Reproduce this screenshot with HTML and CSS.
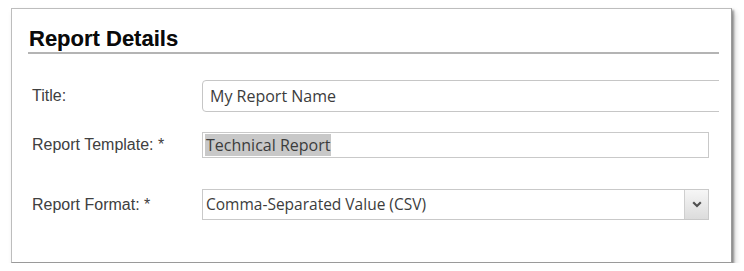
FILE: index.html
```html
<!DOCTYPE html>
<html>
<head>
<meta charset="utf-8">
<link rel="stylesheet" href="styles.css">
</head>
<body>
<div class="frame">
  <div class="panel">
    <h2 class="heading">Report Details</h2>
    <div class="row row-title">
      <div class="label">Title:</div>
      <div class="field field-title">My Report Name</div>
    </div>
    <div class="row row-template">
      <div class="label">Report Template: *</div>
      <div class="field field-template"><span class="selected">Technical Report</span></div>
    </div>
    <div class="row row-format">
      <div class="label">Report Format: *</div>
      <div class="field field-select">
        <span class="select-text">Comma-Separated Value (CSV)</span>
        <span class="select-btn">
          <svg width="10" height="7" viewBox="0 0 10 7"><path d="M1.2 1.3 L5 5 L8.8 1.3" fill="none" stroke="#505050" stroke-width="2.2"/></svg>
        </span>
      </div>
    </div>
  </div>
</div>
</body>
</html>
```
FILE: styles.css
```css
html, body {
  margin: 0;
  padding: 0;
  background: #ffffff;
}
body {
  font-family: "Liberation Sans", Arial, sans-serif;
}
.frame {
  box-sizing: border-box;
  margin: 8px 0 0 11px;
  width: 721px;
  height: 255px;
  padding: 17px 12px 0 16px;
  border: 1px solid #bdbdbd;
  border-right-color: #9a9a9a;
  border-bottom-color: #9a9a9a;
  background: #ffffff;
  box-shadow: 2px 2px 2px rgba(0, 0, 0, 0.35), 3px 4px 6px rgba(0, 0, 0, 0.2);
}
.panel {
  overflow: hidden;
}
.heading {
  margin: 0;
  padding-left: 1px;
  font-size: 22px;
  line-height: 26px;
  font-weight: bold;
  color: #0a0a0a;
  border-bottom: 2px solid #b4b4b4;
  text-shadow: 0 0 0.5px rgba(0, 0, 0, 0.4);
}
.row {
  display: flex;
  align-items: center;
}
.row-title { margin-top: 26px; }
.row-template { margin-top: 20px; }
.row-format { margin-top: 31px; }
.label {
  flex: 0 0 auto;
  box-sizing: border-box;
  width: 174px;
  padding-left: 4px;
  font-size: 16px;
  line-height: 18px;
  color: #404040;
}
.field {
  flex: 0 0 auto;
  box-sizing: border-box;
  font-family: "Open Sans", "Liberation Sans", sans-serif;
  font-size: 16px;
  color: #3c3c3c;
  background: #ffffff;
  white-space: nowrap;
}
.field-title {
  width: 560px;
  height: 32px;
  line-height: 30px;
  padding: 0 7px;
  border: 1px solid #c6c6c6;
  border-radius: 4px;
}
.field-template {
  width: 507px;
  height: 26px;
  padding: 1px 2px;
  border: 1px solid #c9c9c9;
  line-height: 22px;
}
.selected {
  display: inline-block;
  background: #c8c8c8;
  padding: 0 1px;
  line-height: 22px;
}
.field-select {
  width: 507px;
  height: 31px;
  border: 1px solid #c9c9c9;
  display: flex;
  align-items: stretch;
  font-size: 15.5px;
}
.select-text {
  flex: 1 1 auto;
  padding-left: 3px;
  line-height: 29px;
}
.select-btn {
  flex: 0 0 23px;
  display: flex;
  align-items: center;
  justify-content: center;
  border-left: 1px solid #cfcfcf;
  background: linear-gradient(#f6f6f6, #dcdcdc);
}
```
